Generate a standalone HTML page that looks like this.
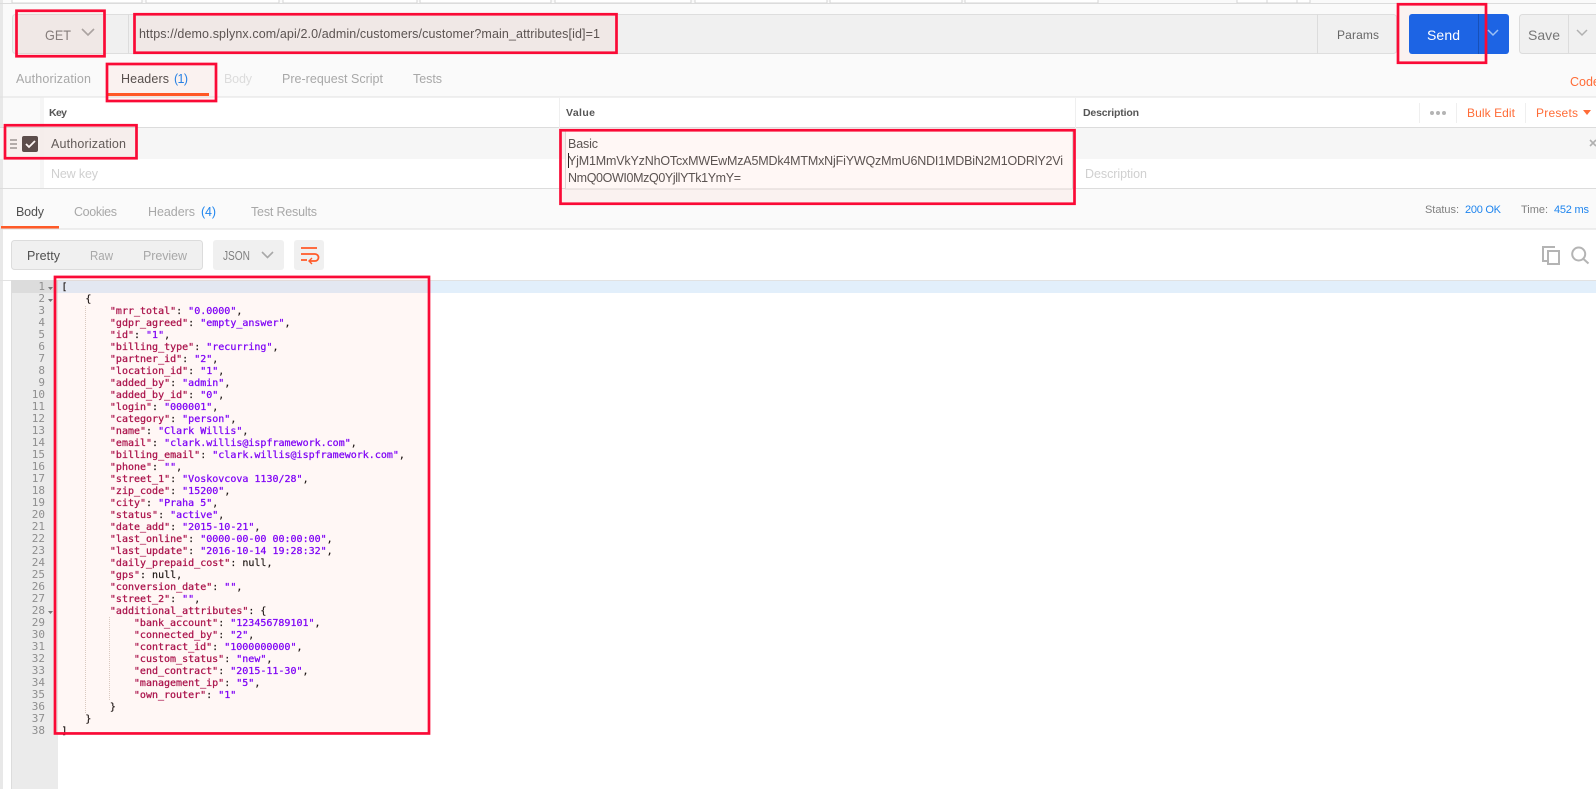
<!DOCTYPE html>
<html lang="en"><head><meta charset="utf-8"><title>Postman</title>
<style>
html,body{margin:0;padding:0;background:#fff;width:1596px;height:789px;overflow:hidden}
svg{display:block;filter:blur(.35px)}
text{font-family:"Liberation Sans",sans-serif;font-size:13px;fill:#808080}
.d{fill:#505050}.l{fill:#a8a8a8}.o{fill:#ff6c37}.b{fill:#1f85ee}
.h{font-size:10.5px;font-weight:bold;fill:#555}
.s{font-size:11px}
.m text,.n text{font-family:"DejaVu Sans Mono","Liberation Mono",monospace;font-size:10px}
.m text{fill:#111;stroke:#111;stroke-width:.15}.n text{fill:#8e8e8e;text-anchor:end;font-size:11px}
.k{fill:#a8124f;stroke:#a8124f;stroke-width:.25}.v{fill:#7a00ff;stroke:#7a00ff;stroke-width:.25}
</style></head><body>
<svg width="1596" height="789" viewBox="0 0 1596 789" xmlns="http://www.w3.org/2000/svg">
<rect width="1596" height="789" fill="#fff"/>
<rect y="0" width="1596" height="97" fill="#fafafa"/>
<rect x="0" y="188" width="1596" height="41" fill="#fafafa"/>
<rect x="0" y="97" width="44" height="91" fill="#fafafa"/>
<rect x="0" y="0" width="3" height="789" fill="#e8e8e8"/>

<!-- top tabs -->
<g fill="#fff" stroke="#d4d4d4">
<rect x="12" y="-2" width="130" height="5"/><rect x="146" y="-2" width="133" height="5"/><rect x="283" y="-2" width="134" height="5"/><rect x="420" y="-2" width="131" height="5"/><rect x="555" y="-2" width="136" height="5"/><rect x="695" y="-2" width="132" height="5"/><rect x="830" y="-2" width="132" height="5"/><rect x="965" y="-2" width="133" height="5"/><rect x="1237" y="-2" width="30" height="5"/><rect x="1267" y="-2" width="30" height="5"/><rect x="1297" y="-2" width="13" height="5"/>
</g>
<rect x="0" y="3" width="1596" height="1" fill="#dcdcdc"/>

<!-- url bar -->
<rect x="12.5" y="14.5" width="1384" height="39" rx="3" fill="#f0f0f0" stroke="#dedede"/>
<path d="M128.5 14v40M1317.5 14v40" stroke="#dcdcdc"/>
<text x="45" y="40" style="font-size:14px" textLength="26" lengthAdjust="spacingAndGlyphs">GET</text>
<path d="M82 29l6 6 6-6" fill="none" stroke="#a8a8a8" stroke-width="1.6"/>
<text x="139" y="38" class="d" style="font-size:12.5px;fill:#555" textLength="461">https://demo.splynx.com/api/2.0/admin/customers/customer?main_attributes[id]=1</text>
<text x="1337" y="39" class="d" style="font-size:12px;fill:#666" textLength="42">Params</text>
<rect x="1397" y="3" width="90" height="61" fill="#ff2a00" fill-opacity=".04"/>
<rect x="1409" y="14" width="100" height="40" rx="3" fill="#1d64e4"/>
<rect x="1478" y="14" width="1" height="40" fill="#1750b8"/>
<text x="1427" y="40" style="font-size:14px;fill:#fff" textLength="33">Send</text>
<path d="M1488 30l5 5 5-5" fill="none" stroke="#9cc0f4" stroke-width="1.5"/>
<rect x="1519.5" y="14.5" width="90" height="39" rx="3" fill="#f0f0f0" stroke="#dcdcdc"/>
<rect x="1568" y="14" width="1" height="40" fill="#dcdcdc"/>
<text x="1528" y="40" style="font-size:14px;fill:#777" textLength="32">Save</text>
<path d="M1577 30l5 5 5-5" fill="none" stroke="#b0b0b0" stroke-width="1.5"/>

<!-- request tabs -->
<text x="16" y="83" class="l" textLength="75" style="font-size:12.5px">Authorization</text>
<text x="121" y="83" class="d" textLength="48" style="font-size:12.5px">Headers</text>
<text x="174" y="83" class="b" textLength="14" style="font-size:12.5px">(1)</text>
<text x="224" y="83" style="fill:#dcdcdc;font-size:12.5px" textLength="28">Body</text>
<text x="282" y="83" class="l" textLength="101" style="font-size:12.5px">Pre-request Script</text>
<text x="413" y="83" class="l" textLength="29" style="font-size:12.5px">Tests</text>
<text x="1570" y="86" class="o" style="font-size:12.5px">Code</text>
<rect x="107.500" y="93" width="101.500" height="3" fill="#ff5a28"/>
<rect x="0" y="96.500" width="1596" height="1" fill="#e0e0e0"/>

<!-- header table -->
<rect x="44" y="98" width="1552" height="29" fill="#fff"/>
<rect x="0" y="127" width="1596" height="32" fill="#f6f6f6"/>
<rect x="3" y="127" width="38" height="32" fill="#f8f8f8"/>
<rect x="44" y="159" width="1552" height="29" fill="#fff"/>
<rect x="40" y="98" width="4" height="90" fill="#f5f5f5"/>
<rect x="0" y="127" width="1596" height="1" fill="#dcdcdc"/>
<rect x="0" y="188" width="1596" height="1" fill="#dcdcdc"/>
<path d="M559.500 98v90M1075.500 98v90M1419.500 103v20M1456.500 103v20M1525.500 103v20" stroke="#efefef"/>
<text x="49" y="116" class="h" textLength="18">Key</text>
<text x="566" y="116" class="h" textLength="29">Value</text>
<text x="1083" y="116" class="h" textLength="56">Description</text>
<g fill="#b4b4b4"><circle cx="1432" cy="113" r="2"/><circle cx="1438" cy="113" r="2"/><circle cx="1444" cy="113" r="2"/></g>
<text x="1467" y="117" class="o" style="font-size:12px" textLength="48">Bulk Edit</text>
<text x="1536" y="117" class="o" style="font-size:12px" textLength="42">Presets</text>
<path d="M1583 110h8l-4 5z" fill="#ff6c37"/>
<path d="M10 140h7M10 144h7M10 148h7" stroke="#a8a8a8" stroke-width="1.8"/>
<rect x="22" y="136" width="16" height="16" rx="2" fill="#574f4f"/>
<path d="M26 144l3 3 6-6" fill="none" stroke="#fff" stroke-width="1.800"/>
<text x="51" y="148" class="d" textLength="75" style="font-size:12.500px;fill:#5c5c5c">Authorization</text>
<text x="51" y="178" style="fill:#d0d0d0;font-size:12.500px" textLength="47">New key</text>
<text x="1085" y="178" style="fill:#d0d0d0;font-size:12.500px" textLength="62">Description</text>
<path d="M1590 140l6 6M1596 140l-6 6" stroke="#b0b0b0" stroke-width="1.600"/>
<rect x="565.500" y="129.500" width="507" height="59.500" fill="#fff" stroke="#dcdcdc"/>
<text x="568" y="148" class="d" style="font-size:12.500px;fill:#555" textLength="30">Basic</text>
<text x="568" y="165" class="d" style="font-size:12.500px;fill:#555" textLength="495">YjM1MmVkYzNhOTcxMWEwMzA5MDk4MTMxNjFiYWQzMmU6NDI1MDBiN2M1ODRlY2Vi</text>
<text x="568" y="182" class="d" style="font-size:12.500px;fill:#555" textLength="173">NmQ0OWI0MzQ0YjllYTk1YmY=</text>
<rect x="568" y="153" width="1" height="15" fill="#222"/>

<!-- response tabs -->
<text x="16" y="216" class="d" textLength="28" style="font-size:12.500px">Body</text>
<text x="74" y="216" class="l" textLength="43" style="font-size:12.500px">Cookies</text>
<text x="148" y="216" class="l" textLength="47" style="font-size:12.500px">Headers</text>
<text x="201" y="216" class="b" textLength="15" style="font-size:12.500px">(4)</text>
<text x="251" y="216" class="l" textLength="66" style="font-size:12.500px">Test Results</text>
<rect x="1" y="226" width="58" height="3" fill="#ff5a28"/>
<rect x="0" y="228.500" width="1596" height="1" fill="#dedede"/>
<text x="1425" y="213" class="s" textLength="34">Status:</text>
<text x="1465" y="213" class="s b" textLength="36">200 OK</text>
<text x="1521" y="213" class="s" textLength="27">Time:</text>
<text x="1554" y="213" class="s b" textLength="35">452 ms</text>

<!-- toolbar -->
<rect x="11.500" y="240.500" width="191" height="29" rx="3" fill="#f0f0f0" stroke="#dcdcdc"/>
<text x="27" y="260" class="d" textLength="33" style="font-size:12.500px">Pretty</text>
<text x="90" y="260" class="l" textLength="23" lengthAdjust="spacingAndGlyphs" style="font-size:12.500px">Raw</text>
<text x="143" y="260" class="l" textLength="44" style="font-size:12.500px">Preview</text>
<rect x="213" y="240" width="71" height="30" rx="3" fill="#f0f0f0"/>
<text x="223" y="260" textLength="27" lengthAdjust="spacingAndGlyphs" style="font-size:12.500px">JSON</text>
<path d="M262 252l5.500 5.500 5.500-5.500" fill="none" stroke="#a8a8a8" stroke-width="1.600"/>
<rect x="294" y="240" width="30" height="30" rx="3" fill="#f0f0f0"/>
<g fill="none" stroke="#ff5a28" stroke-width="1.800"><path d="M301 248h16M301 254h14a3.500 3.500 0 0 1 0 7h-5M301 260h6"/><path d="M312 258l-3 3 3 3" stroke-width="1.400"/></g>
<g fill="none" stroke="#b4b4b4" stroke-width="2"><path d="M1555 247h-12v14h4"/><rect x="1548" y="251" width="11" height="13"/><circle cx="1578.700" cy="254" r="6.500"/><path d="M1583.500 259l5 4.500"/></g>

<!-- editor -->
<rect x="0" y="280" width="1596" height="1" fill="#e2e2e2"/>
<rect x="58" y="281" width="1538" height="12" fill="#e2effb"/>
<rect x="11" y="280" width="47" height="509" fill="#ebebeb"/>
<rect x="11" y="280" width="47" height="13" fill="#dcdcdc"/>
<rect x="11" y="280" width="1" height="509" fill="#dcdcdc"/>
<path d="M48 287h5l-2.500 3zM48 299h5l-2.500 3zM48 611h5l-2.500 3z" fill="#777"/>
<g class="n">
<text x="45" y="290">1</text><text x="45" y="302">2</text><text x="45" y="314">3</text><text x="45" y="326">4</text><text x="45" y="338">5</text><text x="45" y="350">6</text><text x="45" y="362">7</text><text x="45" y="374">8</text><text x="45" y="386">9</text><text x="45" y="398">10</text><text x="45" y="410">11</text><text x="45" y="422">12</text><text x="45" y="434">13</text><text x="45" y="446">14</text><text x="45" y="458">15</text><text x="45" y="470">16</text><text x="45" y="482">17</text><text x="45" y="494">18</text><text x="45" y="506">19</text><text x="45" y="518">20</text><text x="45" y="530">21</text><text x="45" y="542">22</text><text x="45" y="554">23</text><text x="45" y="566">24</text><text x="45" y="578">25</text><text x="45" y="590">26</text><text x="45" y="602">27</text><text x="45" y="614">28</text><text x="45" y="626">29</text><text x="45" y="638">30</text><text x="45" y="650">31</text><text x="45" y="662">32</text><text x="45" y="674">33</text><text x="45" y="686">34</text><text x="45" y="698">35</text><text x="45" y="710">36</text><text x="45" y="722">37</text><text x="45" y="734">38</text>
</g>
<path d="M85.500 306v407M109.500 617v84" stroke="#d8d0c8" stroke-dasharray="1 1"/>
<g class="m" transform="translate(-.6 0)">
<text x="62" y="290">[</text>
<text x="86" y="302">{</text>
<text x="110.500" y="314"><tspan class="k">"mrr_total"</tspan>: <tspan class="v">"0.0000"</tspan>,</text>
<text x="110.500" y="326"><tspan class="k">"gdpr_agreed"</tspan>: <tspan class="v">"empty_answer"</tspan>,</text>
<text x="110.500" y="338"><tspan class="k">"id"</tspan>: <tspan class="v">"1"</tspan>,</text>
<text x="110.500" y="350"><tspan class="k">"billing_type"</tspan>: <tspan class="v">"recurring"</tspan>,</text>
<text x="110.500" y="362"><tspan class="k">"partner_id"</tspan>: <tspan class="v">"2"</tspan>,</text>
<text x="110.500" y="374"><tspan class="k">"location_id"</tspan>: <tspan class="v">"1"</tspan>,</text>
<text x="110.500" y="386"><tspan class="k">"added_by"</tspan>: <tspan class="v">"admin"</tspan>,</text>
<text x="110.500" y="398"><tspan class="k">"added_by_id"</tspan>: <tspan class="v">"0"</tspan>,</text>
<text x="110.500" y="410"><tspan class="k">"login"</tspan>: <tspan class="v">"000001"</tspan>,</text>
<text x="110.500" y="422"><tspan class="k">"category"</tspan>: <tspan class="v">"person"</tspan>,</text>
<text x="110.500" y="434"><tspan class="k">"name"</tspan>: <tspan class="v">"Clark Willis"</tspan>,</text>
<text x="110.500" y="446"><tspan class="k">"email"</tspan>: <tspan class="v">"clark.willis@ispframework.com"</tspan>,</text>
<text x="110.500" y="458"><tspan class="k">"billing_email"</tspan>: <tspan class="v">"clark.willis@ispframework.com"</tspan>,</text>
<text x="110.500" y="470"><tspan class="k">"phone"</tspan>: <tspan class="v">""</tspan>,</text>
<text x="110.500" y="482"><tspan class="k">"street_1"</tspan>: <tspan class="v">"Voskovcova 1130/28"</tspan>,</text>
<text x="110.500" y="494"><tspan class="k">"zip_code"</tspan>: <tspan class="v">"15200"</tspan>,</text>
<text x="110.500" y="506"><tspan class="k">"city"</tspan>: <tspan class="v">"Praha 5"</tspan>,</text>
<text x="110.500" y="518"><tspan class="k">"status"</tspan>: <tspan class="v">"active"</tspan>,</text>
<text x="110.500" y="530"><tspan class="k">"date_add"</tspan>: <tspan class="v">"2015-10-21"</tspan>,</text>
<text x="110.500" y="542"><tspan class="k">"last_online"</tspan>: <tspan class="v">"0000-00-00 00:00:00"</tspan>,</text>
<text x="110.500" y="554"><tspan class="k">"last_update"</tspan>: <tspan class="v">"2016-10-14 19:28:32"</tspan>,</text>
<text x="110.500" y="566"><tspan class="k">"daily_prepaid_cost"</tspan>: null,</text>
<text x="110.500" y="578"><tspan class="k">"gps"</tspan>: null,</text>
<text x="110.500" y="590"><tspan class="k">"conversion_date"</tspan>: <tspan class="v">""</tspan>,</text>
<text x="110.500" y="602"><tspan class="k">"street_2"</tspan>: <tspan class="v">""</tspan>,</text>
<text x="110.500" y="614"><tspan class="k">"additional_attributes"</tspan>: {</text>
<text x="134.500" y="626"><tspan class="k">"bank_account"</tspan>: <tspan class="v">"123456789101"</tspan>,</text>
<text x="134.500" y="638"><tspan class="k">"connected_by"</tspan>: <tspan class="v">"2"</tspan>,</text>
<text x="134.500" y="650"><tspan class="k">"contract_id"</tspan>: <tspan class="v">"1000000000"</tspan>,</text>
<text x="134.500" y="662"><tspan class="k">"custom_status"</tspan>: <tspan class="v">"new"</tspan>,</text>
<text x="134.500" y="674"><tspan class="k">"end_contract"</tspan>: <tspan class="v">"2015-11-30"</tspan>,</text>
<text x="134.500" y="686"><tspan class="k">"management_ip"</tspan>: <tspan class="v">"5"</tspan>,</text>
<text x="134.500" y="698"><tspan class="k">"own_router"</tspan>: <tspan class="v">"1"</tspan></text>
<text x="110.500" y="710">}</text>
<text x="86" y="722">}</text>
<text x="62" y="734">]</text>
</g>

<!-- red annotation boxes -->
<g fill="#ff2a00" fill-opacity=".04" stroke="#fa0a36" stroke-width="2.700">
<rect x="16.500" y="10.750" width="88" height="45.500"/>
<rect x="134.500" y="14.250" width="482" height="38.500"/>
<rect x="1398" y="4.250" width="88" height="58.500" fill="none"/>
<rect x="107" y="64" width="109" height="37"/>
<rect x="5" y="125.250" width="131.500" height="33"/>
<rect x="560.500" y="130.250" width="514" height="73.500"/>
<rect x="55" y="276.950" width="374" height="456.500"/>
</g>
</svg>
</body></html>
